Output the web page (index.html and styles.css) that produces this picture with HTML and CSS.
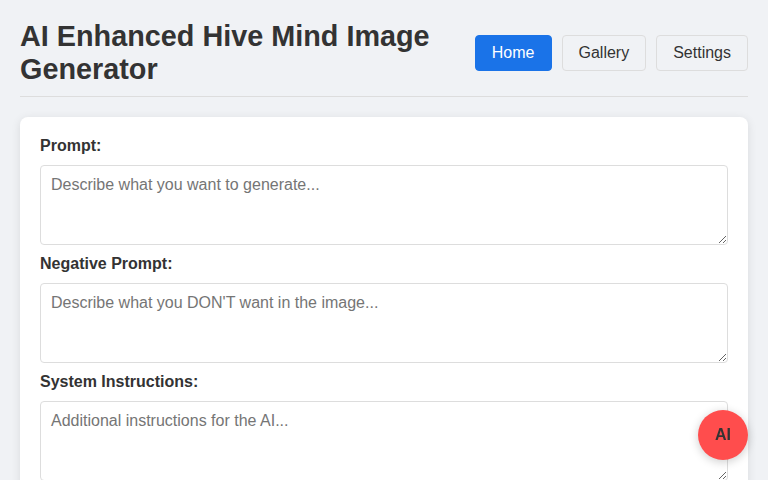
FILE: index.html
```html
<!DOCTYPE html>
<html lang="en">
<head>
  <meta charset="UTF-8" />
  <meta name="viewport" content="width=device-width, initial-scale=1.0" />
  <title>AI Enhanced Hive Mind Image Generator</title>
  <link rel="stylesheet" href="styles.css">
</head>
<body>
  <header class="header">
    <h1>AI Enhanced Hive Mind Image Generator</h1>
    <nav class="nav">
      <button class="nav-btn active">Home</button>
      <button class="nav-btn">Gallery</button>
      <button class="nav-btn">Settings</button>
    </nav>
  </header>

  <main class="card">
    <div class="field">
      <label for="prompt">Prompt:</label>
      <textarea id="prompt" placeholder="Describe what you want to generate..."></textarea>
    </div>
    <div class="field">
      <label for="negative">Negative Prompt:</label>
      <textarea id="negative" placeholder="Describe what you DON'T want in the image..."></textarea>
    </div>
    <div class="field">
      <label for="system">System Instructions:</label>
      <textarea id="system" placeholder="Additional instructions for the AI..."></textarea>
    </div>
  </main>

  <button class="ai-btn">AI</button>
</body>
</html>
```

FILE: styles.css
```css
body {
  background: #f0f2f5;
  font-family: 'Liberation Sans', Arial, sans-serif;
  color: #333;
  margin: 0;
  padding: 20px;
}
.header {
  display: flex;
  justify-content: space-between;
  align-items: center;
  gap: 20px;
  padding-bottom: 10px;
  border-bottom: 1px solid #ddd;
  margin-bottom: 20px;
}
.header h1 {
  font-size: 1.8em;
  margin: 0;
}
.nav {
  display: flex;
  gap: 10px;
  flex-shrink: 0;
}
.nav-btn {
  font-family: inherit;
  font-size: 16px;
  color: #333;
  background: #f0f2f5;
  border: 1px solid #ddd;
  border-radius: 4px;
  padding: 8px 16px;
  cursor: pointer;
}
.nav-btn.active {
  background: #1a73e8;
  border-color: #1a73e8;
  color: white;
}
.card {
  display: block;
  background: white;
  border-radius: 8px;
  box-shadow: 0 2px 10px rgba(0, 0, 0, 0.1);
  padding: 20px;
}
.field {
  margin-bottom: 10px;
}
.field label {
  display: block;
  font-weight: bold;
  margin-bottom: 10px;
}
.field textarea {
  display: block;
  width: 100%;
  height: 80px;
  box-sizing: border-box;
  padding: 10px;
  border: 1px solid #ddd;
  border-radius: 4px;
  font-family: inherit;
  font-size: 16px;
  color: #333;
}
.ai-btn {
  position: fixed;
  right: 20px;
  bottom: 20px;
  width: 50px;
  height: 50px;
  border: none;
  border-radius: 50%;
  background: #ff4d4d;
  color: #333;
  font-family: inherit;
  font-size: 16px;
  font-weight: bold;
  box-shadow: 0 2px 10px rgba(0, 0, 0, 0.2);
  cursor: pointer;
}
```
